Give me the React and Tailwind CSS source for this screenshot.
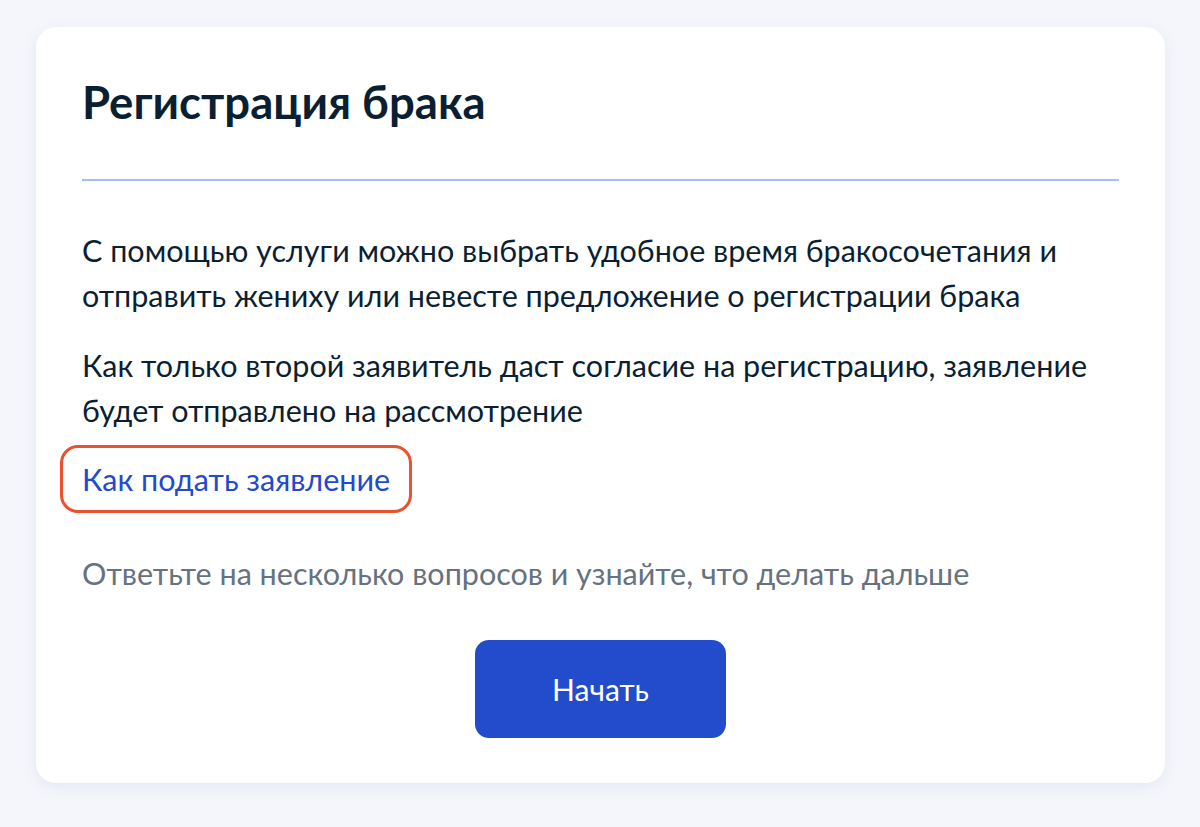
import React from "react";

const font = { fontFamily: "Lato, 'Noto Sans', sans-serif" };

export default function App() {
  return (
    <div className="min-h-[827px] bg-[#f4f6fb] pt-[27px] pl-[36px]" style={font}>
      <section className="w-[1129px] rounded-[20px] bg-white px-[46px] pt-[49px] pb-[45px] shadow-[0_4px_14px_rgba(52,77,140,0.08)]">
        <h1 className="text-[45.5px] leading-[52px] font-bold text-[#0b1f33]">Регистрация брака</h1>

        <div className="mt-[51px] h-[2px] bg-[#a9bcf3]" />

        <div className="text-[30.5px] leading-[45px] text-[#0b1f33]">
          <p className="mt-[47px]">
            С помощью услуги можно выбрать удобное время бракосочетания и
            <br />
            отправить жениху или невесте предложение о регистрации брака
          </p>
          <p className="mt-[25px]">
            Как только второй заявитель даст согласие на регистрацию, заявление
            <br />
            будет отправлено на рассмотрение
          </p>
        </div>

        <div className="mt-[24px]">
          <a href="#" className="relative inline-block text-[30.5px] leading-[45px] text-[#2349cc]">
            Как подать заявление
            <span className="pointer-events-none absolute -top-[12px] -bottom-[11px] -left-[22px] -right-[22px] rounded-[18px] border-[3px] border-[#e9512f]" />
          </a>
        </div>

        <p className="mt-[49px] text-[30.5px] leading-[45px] text-[#66727f]">
          Ответьте на несколько вопросов и узнайте, что делать дальше
        </p>

        <div className="mt-[44px] flex justify-center">
          <button className="h-[98px] w-[251px] rounded-[14px] bg-[#224ccb] text-[30px] text-white">
            Начать
          </button>
        </div>
      </section>
    </div>
  );
}
